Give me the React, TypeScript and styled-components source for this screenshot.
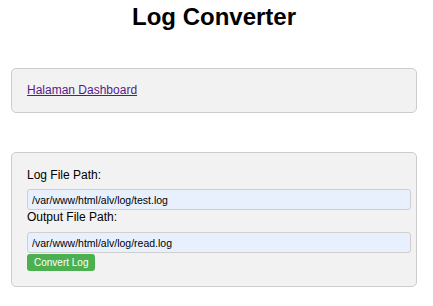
import React from "react";
import styled, { createGlobalStyle } from "styled-components";

const GlobalStyle = createGlobalStyle`
  html, body {
    margin: 0;
    padding: 0;
    background: #fff;
    font-family: "Liberation Sans", Arial, sans-serif;
    color: #000;
  }
`;

const Page = styled.div`
  width: 406px;
  margin: 0 0 0 11px;
  padding-bottom: 10px;
`;

const Title = styled.h1`
  margin: 3px 0 37px;
  font-size: 24px;
  line-height: 28px;
  font-weight: 700;
  text-align: center;
`;

const Card = styled.div<{ $gap?: number }>`
  background: #f2f2f2;
  border: 1px solid #cccccc;
  border-radius: 5px;
  padding: 15px;
  margin-bottom: ${(p) => p.$gap ?? 0}px;
`;

const NavLink = styled.a`
  display: block;
  font-size: 12px;
  line-height: 13px;
  color: #551a8b;
  text-decoration: underline;
`;

const Label = styled.label<{ $after?: number }>`
  display: block;
  font-size: 12px;
  line-height: 14px;
  margin-bottom: ${(p) => p.$after ?? 7}px;
`;

const PathInput = styled.input`
  display: block;
  width: 100%;
  height: 11px;
  margin: 0;
  padding: 4px;
  border: 1px solid #cfcfcf;
  border-radius: 3px;
  background: #e8f0fe;
  font-family: "Liberation Sans", Arial, sans-serif;
  font-size: 10.5px;
  line-height: 11px;
  color: #000;
  outline: none;
`;

const ConvertButton = styled.button`
  display: block;
  margin-top: 1px;
  padding: 2px 7px;
  border: none;
  border-radius: 3px;
  background: #4caf50;
  color: #fff;
  font-family: "Liberation Sans", Arial, sans-serif;
  font-size: 10px;
  line-height: 13px;
  cursor: pointer;
`;

export default function App() {
  return (
    <>
      <GlobalStyle />
      <Page>
        <Title>Log Converter</Title>
        <Card $gap={39}>
          <NavLink href="#">Halaman Dashboard</NavLink>
        </Card>
        <Card>
          <form onSubmit={(e) => e.preventDefault()}>
            <Label htmlFor="log">Log File Path:</Label>
            <PathInput id="log" defaultValue="/var/www/html/alv/log/test.log" />
            <Label htmlFor="out" $after={8}>
              Output File Path:
            </Label>
            <PathInput id="out" defaultValue="/var/www/html/alv/log/read.log" />
            <ConvertButton type="submit">Convert Log</ConvertButton>
          </form>
        </Card>
      </Page>
    </>
  );
}
